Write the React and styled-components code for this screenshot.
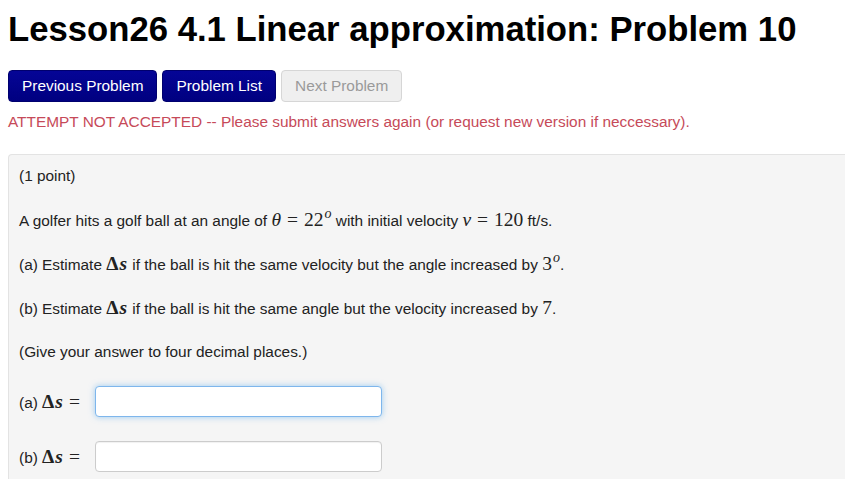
import React from "react";
import styled, { createGlobalStyle } from "styled-components";

const Global = createGlobalStyle`
  html, body { margin: 0; padding: 0; background: #fff; }
  body {
    font-family: "Liberation Sans", Arial, sans-serif;
    font-size: 15.4px;
    color: #222;
    overflow: hidden;
  }
`;

const Page = styled.div`
  padding: 0 0 0 8px;
  width: 845px;
  box-sizing: border-box;
`;

const Title = styled.h1`
  margin: 0;
  padding-top: 9px;
  font-size: 34.7px;
  line-height: 40px;
  font-weight: bold;
  color: #000;
`;

const Nav = styled.div`
  display: flex;
  gap: 5px;
  margin-top: 21px;
`;

const NavButton = styled.button`
  font-family: "Liberation Sans", Arial, sans-serif;
  font-size: 15.4px;
  height: 32px;
  padding: 0 13px;
  border-radius: 4px;
  cursor: pointer;
  border: 1px solid ${(p) => (p.disabled ? "#d6d6d6" : "#00006e")};
  background: ${(p) =>
    p.disabled ? "#efefef" : "linear-gradient(#050596, #000080)"};
  color: ${(p) => (p.disabled ? "#9a9a9a" : "#fff")};
`;

const Error = styled.div`
  margin-top: 10px;
  color: #c64a59;
  line-height: 20px;
`;

const ProblemBox = styled.div`
  margin-top: 22px;
  background: #f5f5f5;
  border: 1px solid #e3e3e3;
  border-right: none;
  border-radius: 4px 0 0 4px;
  padding: 11px 10px 0 10px;
  display: flex;
  flex-direction: column;
  gap: 24px;
  height: 340px;
  box-sizing: border-box;
`;

const Para = styled.div`
  line-height: 20px;
  height: 20px;
  white-space: nowrap;
`;

const M = styled.span`
  font-family: "Liberation Serif", "Times New Roman", serif;
  font-size: 19.5px;
  font-style: ${(p) => (p.$i ? "italic" : "normal")};
  font-weight: ${(p) => (p.$b ? "bold" : "normal")};
  margin: 0 ${(p) => p.$m || 0}px;
`;

const Sup = styled.sup`
  font-family: "Liberation Serif", "Times New Roman", serif;
  font-style: italic;
  font-size: 14px;
  line-height: 0;
  vertical-align: 8px;
  margin-left: 1px;
`;

const AnswerRow = styled.div`
  display: flex;
  align-items: center;
  gap: 10px;
  height: 31px;
`;

const Input = styled.input`
  width: 287px;
  height: 31px;
  box-sizing: border-box;
  border-radius: 4px;
  background: #fff;
  outline: none;
  font-size: 15px;
  border: 1px solid ${(p) => (p.$focus ? "#7eb6ec" : "#cccccc")};
  box-shadow: ${(p) =>
    p.$focus ? "0 0 6px rgba(82,168,236,0.55)" : "inset 0 1px 1px rgba(0,0,0,0.06)"};
`;

const Delta = () => (
  <>
    <M $b>Δ</M>
    <M $b $i $m={1}>s</M>
  </>
);

export default function App() {
  return (
    <>
      <Global />
      <Page>
        <Title>Lesson26 4.1 Linear approximation: Problem 10</Title>
        <Nav>
          <NavButton>Previous Problem</NavButton>
          <NavButton>Problem List</NavButton>
          <NavButton disabled>Next Problem</NavButton>
        </Nav>
        <Error>
          ATTEMPT NOT ACCEPTED -- Please submit answers again (or request new
          version if neccessary).
        </Error>
        <ProblemBox>
          <Para>(1 point)</Para>
          <Para>
            A golfer hits a golf ball at an angle of{" "}
            <M $i>θ</M>
            <M $m={6}>=</M>
            <M>22</M>
            <Sup>o</Sup> with initial velocity <M $i>v</M>
            <M $m={6}>=</M>
            <M>120</M> ft/s.
          </Para>
          <Para>
            (a) Estimate <Delta /> if the ball is hit the same velocity but the
            angle increased by <M>3</M>
            <Sup>o</Sup>.
          </Para>
          <Para>
            (b) Estimate <Delta /> if the ball is hit the same angle but the
            velocity increased by <M>7</M>.
          </Para>
          <Para>(Give your answer to four decimal places.)</Para>
          <AnswerRow>
            <span>
              (a) <Delta />
              <M $m={5}>=</M>
            </span>
            <Input $focus />
          </AnswerRow>
          <AnswerRow>
            <span>
              (b) <Delta />
              <M $m={5}>=</M>
            </span>
            <Input />
          </AnswerRow>
        </ProblemBox>
      </Page>
    </>
  );
}
